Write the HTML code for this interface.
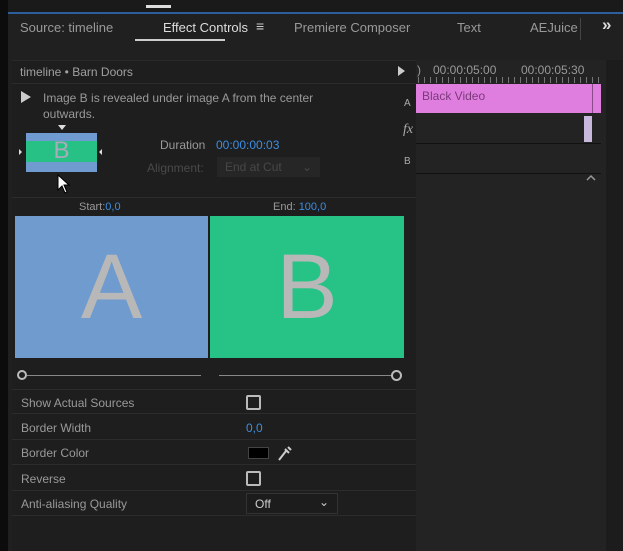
<!DOCTYPE html><html><head><style>
*{margin:0;padding:0;box-sizing:border-box}
body{width:623px;height:551px;background:#1e1e1e;position:relative;overflow:hidden;font-family:"Liberation Sans",sans-serif;color:#a8a8a8;font-size:12px}
.a{position:absolute}
.blue{color:#3d8ee0}
.row{position:absolute;left:12px;width:404px;height:25px;border-bottom:1px solid #2c2c2c}
.row span{position:absolute;left:9px;top:6px;color:#999}
.cb{position:absolute;width:15px;height:15px;border:2px solid #bbb;border-radius:2px}
</style></head><body>
<div class="a" style="left:0;top:0;width:8px;height:551px;background:#0c0c0c"></div>
<div class="a" style="left:8px;top:0;width:615px;height:13px;background:#1a1a1a"></div>
<div class="a" style="left:146px;top:5px;width:25px;height:3px;background:#ddd"></div>
<div class="a" style="left:8px;top:12px;width:615px;height:2px;background:#2d5e9e"></div>
<div class="a" style="left:8px;top:14px;width:615px;height:537px;background:#202020"></div>
<div class="a" style="left:20px;top:20px;font-size:13px;color:#999">Source: timeline</div>
<div class="a" style="left:163px;top:20px;font-size:13px;color:#ddd">Effect Controls</div>
<div class="a" style="left:256px;top:18px;font-size:14px;color:#ccc">≡</div>
<div class="a" style="left:135px;top:39px;width:90px;height:2px;background:#ccc"></div>
<div class="a" style="left:294px;top:20px;font-size:13px;color:#999">Premiere Composer</div>
<div class="a" style="left:457px;top:20px;font-size:13px;color:#999">Text</div>
<div class="a" style="left:530px;top:20px;font-size:13px;color:#999">AEJuice</div>
<div class="a" style="left:580px;top:18px;width:1px;height:22px;background:#444"></div>
<div class="a" style="left:602px;top:15px;font-size:17px;color:#ddd;font-weight:bold">»</div>
<div class="a" style="left:12px;top:60px;width:404px;height:491px;background:#1e1e1e;border-top:1px solid #2a2a2a"></div>
<div class="a" style="left:12px;top:60px;width:404px;height:24px;border-bottom:1px solid #2c2c2c"></div>
<div class="a" style="left:20px;top:65px;color:#a0a0a0">timeline • Barn Doors</div>
<div class="a" style="left:398px;top:66px;width:0;height:0;border-left:7px solid #ccc;border-top:5px solid transparent;border-bottom:5px solid transparent"></div>
<div class="a" style="left:21px;top:91px;width:0;height:0;border-left:10px solid #ccc;border-top:6px solid transparent;border-bottom:6px solid transparent"></div>
<div class="a" style="left:43px;top:90px;width:310px;line-height:16px;color:#999">Image B is revealed under image A from the center outwards.</div>
<div class="a" style="left:58px;top:125px;width:0;height:0;border-top:5px solid #ddd;border-left:4px solid transparent;border-right:4px solid transparent"></div>
<div class="a" style="left:26px;top:133px;width:71px;height:39px;background:#6f9bd0"></div>
<div class="a" style="left:26px;top:141px;width:71px;height:21px;background:#27c185"></div>
<div class="a" style="left:26px;top:137px;width:71px;text-align:center;font-size:24px;color:#aab;line-height:28px">B</div>
<div class="a" style="left:19px;top:149px;border-left:3px solid #ddd;border-top:3px solid transparent;border-bottom:3px solid transparent"></div>
<div class="a" style="left:99px;top:149px;border-right:3px solid #ddd;border-top:3px solid transparent;border-bottom:3px solid transparent"></div>
<svg class="a" style="left:57px;top:174px" width="14" height="22"><path d="M1 1 L1 16 L5 12 L8 19 L10 18 L7 11 L12 11 Z" fill="#fff" stroke="#000"/></svg>
<div class="a" style="left:160px;top:138px;color:#999">Duration</div>
<div class="a blue" style="left:216px;top:138px">00:00:00:03</div>
<div class="a" style="left:147px;top:161px;color:#4a4a4a">Alignment:</div>
<div class="a" style="left:217px;top:157px;width:103px;height:20px;background:#262626;color:#484848;padding:3px 8px">End at Cut <span style="position:absolute;right:8px">⌄</span></div>
<div class="a" style="left:12px;top:197px;width:404px;height:1px;background:#2c2c2c"></div>
<div class="a" style="left:79px;top:201px;color:#999;font-size:11px">Start:<span class="blue">0,0</span></div>
<div class="a" style="left:273px;top:201px;color:#999;font-size:11px">End: <span class="blue">100,0</span></div>
<div class="a" style="left:15px;top:216px;width:193px;height:142px;background:#6f9bcf;text-align:center;font-size:92px;line-height:142px;color:#b8b8b8">A</div>
<div class="a" style="left:210px;top:216px;width:194px;height:142px;background:#27c286;text-align:center;font-size:92px;line-height:142px;color:#b8b8b8">B</div>
<div class="a" style="left:17px;top:370px;width:10px;height:10px;border:2px solid #bbb;border-radius:50%"></div>
<div class="a" style="left:27px;top:375px;width:174px;height:1px;background:#888"></div>
<div class="a" style="left:219px;top:375px;width:172px;height:1px;background:#888"></div>
<div class="a" style="left:391px;top:370px;width:11px;height:11px;border:2px solid #bbb;border-radius:50%"></div>
<div class="row" style="top:389px;border-top:1px solid #2c2c2c"><span>Show Actual Sources</span></div>
<div class="cb" style="left:246px;top:395px"></div>
<div class="row" style="top:415px"><span>Border Width</span><span class="blue" style="left:234px;color:#3d8ee0">0,0</span></div>
<div class="row" style="top:440px"><span>Border Color</span></div>
<div class="a" style="left:248px;top:447px;width:21px;height:12px;background:#000;border:1px solid #444"></div>
<svg class="a" style="left:276px;top:445px" width="16" height="17"><path d="M3 15 L10 6 M12 2 L15 5 M9 4 L13 8" stroke="#ccc" stroke-width="2" fill="none"/></svg>
<div class="row" style="top:466px"><span>Reverse</span></div>
<div class="cb" style="left:246px;top:471px"></div>
<div class="row" style="top:491px"><span>Anti-aliasing Quality</span></div>
<div class="a" style="left:246px;top:493px;width:92px;height:21px;border:1px solid #333;background:#1c1c1c;color:#ccc;padding:3px 8px">Off<span style="position:absolute;right:8px;top:1px">⌄</span></div>
<div class="a" style="left:416px;top:60px;width:190px;height:491px;background:#232323"></div>
<div class="a" style="left:417px;top:63px;color:#999">)</div>
<div class="a" style="left:433px;top:63px;color:#999">00:00:05:00</div>
<div class="a" style="left:521px;top:63px;color:#999">00:00:05:30</div>
<div class="a" style="left:418px;top:77px;width:183px;height:6px;background:repeating-linear-gradient(90deg,#777 0 1px,transparent 1px 6px)"></div>
<div class="a" style="left:416px;top:84px;width:185px;height:29px;background:#e07ee0"></div>
<div class="a" style="left:592px;top:84px;width:1px;height:29px;background:#8a4a8a"></div>
<div class="a" style="left:422px;top:89px;color:#7a3a7a">Black Video</div>
<div class="a" style="left:404px;top:98px;font-size:10px;color:#aaa">A</div>
<div class="a" style="left:403px;top:122px;font-size:14px;color:#aaa;font-style:italic;font-family:'Liberation Serif',serif">fx</div>
<div class="a" style="left:404px;top:156px;font-size:10px;color:#aaa">B</div>
<div class="a" style="left:584px;top:116px;width:8px;height:26px;background:#c7b8dc"></div>
<div class="a" style="left:416px;top:143px;width:185px;height:1px;background:#111"></div>
<div class="a" style="left:416px;top:173px;width:185px;height:1px;background:#111"></div>
<svg class="a" style="left:586px;top:174px" width="10" height="8"><path d="M1 6 L5 2 L9 6" stroke="#999" stroke-width="1.5" fill="none"/></svg>
<div class="a" style="left:606px;top:60px;width:17px;height:491px;background:#1c1c1c"></div>
</body></html>
